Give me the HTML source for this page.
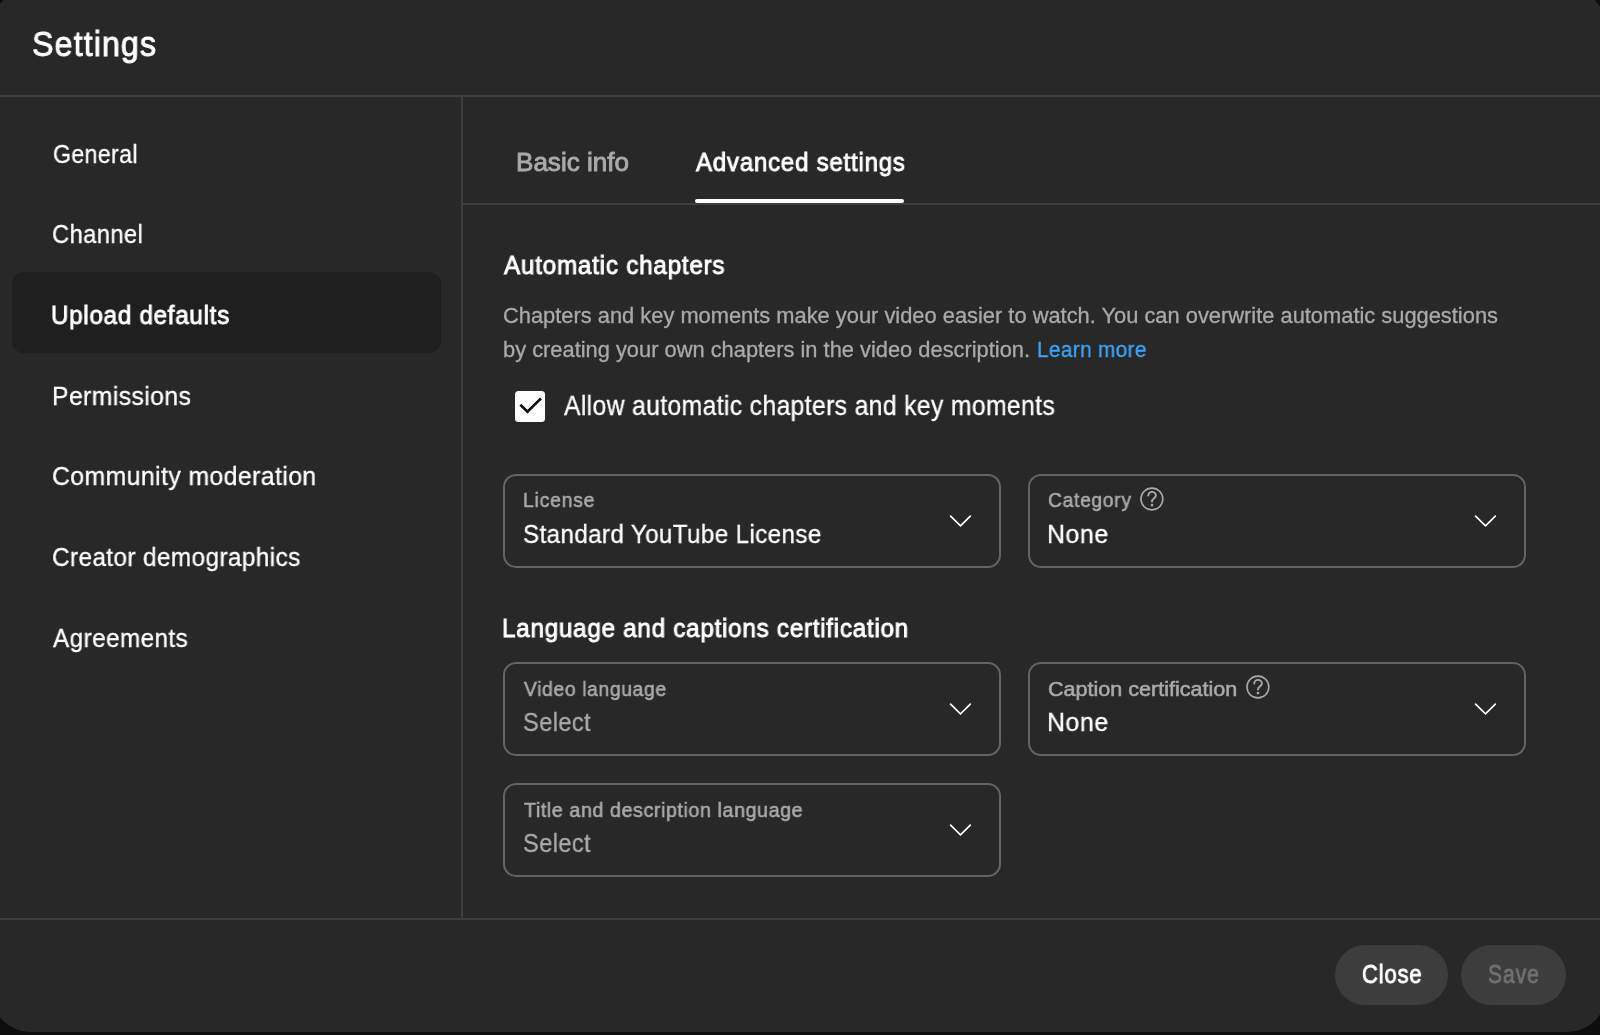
<!DOCTYPE html>
<html><head><meta charset="utf-8"><style>
html,body{margin:0;padding:0;width:1600px;height:1035px;overflow:hidden;background:#0d0d0d;}
.dlg{position:absolute;left:-7.7px;top:-11px;width:1613.7px;height:1043px;border-radius:38px;background:#282828;overflow:hidden;}
.abs{position:absolute;}
.t{position:absolute;white-space:nowrap;will-change:transform;font-family:"Liberation Sans",sans-serif;transform-origin:0 0;}
.ic{position:absolute;overflow:visible;}
.box{position:absolute;border:2px solid #646464;border-radius:13px;box-sizing:border-box;}
</style></head><body>
<div class="dlg"></div>
<div class="abs" style="left:0;top:95px;width:1600px;height:2px;background:#3e3e3e"></div>
<div class="abs" style="left:461px;top:97px;width:2px;height:821px;background:#3e3e3e"></div>
<div class="abs" style="left:463px;top:203px;width:1137px;height:2px;background:#3e3e3e"></div>
<div class="abs" style="left:0;top:918px;width:1600px;height:2px;background:#3e3e3e"></div>
<div class="abs" style="left:12px;top:272px;width:428.7px;height:80.5px;border-radius:12px;background:#1f1f1f"></div>
<div class="abs" style="left:695px;top:199.3px;width:209px;height:3.7px;border-radius:2px;background:#ffffff"></div>
<div class="abs" style="left:514.8px;top:390.9px;width:30.4px;height:31px;border-radius:3.5px;background:#ffffff"></div>
<svg class="ic" style="left:505px;top:380px" width="50" height="50" viewBox="0 0 50 50"><path d="M15.3 24.8 L22.5 31.7 L36 18.4" fill="none" stroke="#0f0f0f" stroke-width="2.7"/></svg>
<div class="box" style="left:503px;top:474px;width:498px;height:94px"></div>
<div class="box" style="left:1028px;top:474px;width:498px;height:94px"></div>
<div class="box" style="left:503px;top:662px;width:498px;height:94.3px"></div>
<div class="box" style="left:1028px;top:662px;width:498px;height:94.2px"></div>
<div class="box" style="left:503px;top:783px;width:498px;height:94.2px"></div>
<svg class="ic" style="left:945px;top:510px" width="30" height="20" viewBox="0 0 30 20"><path d="M5.6 6.2 L15.5 15.9 L25.3 6.2" fill="none" stroke="#ffffff" stroke-width="1.7" stroke-linecap="round" stroke-linejoin="miter"/></svg>
<svg class="ic" style="left:1470px;top:510px" width="30" height="20" viewBox="0 0 30 20"><path d="M5.6 6.2 L15.5 15.9 L25.3 6.2" fill="none" stroke="#ffffff" stroke-width="1.7" stroke-linecap="round" stroke-linejoin="miter"/></svg>
<svg class="ic" style="left:945px;top:697.6px" width="30" height="20" viewBox="0 0 30 20"><path d="M5.6 6.2 L15.5 15.9 L25.3 6.2" fill="none" stroke="#ffffff" stroke-width="1.7" stroke-linecap="round" stroke-linejoin="miter"/></svg>
<svg class="ic" style="left:1470px;top:697.6px" width="30" height="20" viewBox="0 0 30 20"><path d="M5.6 6.2 L15.5 15.9 L25.3 6.2" fill="none" stroke="#ffffff" stroke-width="1.7" stroke-linecap="round" stroke-linejoin="miter"/></svg>
<svg class="ic" style="left:945px;top:818.7px" width="30" height="20" viewBox="0 0 30 20"><path d="M5.6 6.2 L15.5 15.9 L25.3 6.2" fill="none" stroke="#ffffff" stroke-width="1.7" stroke-linecap="round" stroke-linejoin="miter"/></svg>
<svg class="ic" style="left:1137.6px;top:484.9px" width="28" height="28" viewBox="0 0 28 28"><circle cx="13.9" cy="14" r="10.9" fill="none" stroke="#aaaaaa" stroke-width="1.6"/><path d="M10.3 10.5 C10.3 8.4 12 6.9 14 6.9 C16.1 6.9 17.9 8.4 17.9 10.5 C17.9 13 14 13.4 14 16.5" fill="none" stroke="#aaaaaa" stroke-width="1.9" stroke-linecap="round"/><circle cx="14" cy="20.1" r="1.35" fill="#aaaaaa"/></svg>
<svg class="ic" style="left:1243.6px;top:673.2px" width="28" height="28" viewBox="0 0 28 28"><circle cx="13.9" cy="14" r="10.9" fill="none" stroke="#aaaaaa" stroke-width="1.6"/><path d="M10.3 10.5 C10.3 8.4 12 6.9 14 6.9 C16.1 6.9 17.9 8.4 17.9 10.5 C17.9 13 14 13.4 14 16.5" fill="none" stroke="#aaaaaa" stroke-width="1.9" stroke-linecap="round"/><circle cx="14" cy="20.1" r="1.35" fill="#aaaaaa"/></svg>
<div class="abs" style="left:1335px;top:945px;width:112.7px;height:60.4px;border-radius:31px;background:#3d3d3d"></div>
<div class="abs" style="left:1461.4px;top:945px;width:104.6px;height:60.4px;border-radius:31px;background:#3d3d3d"></div>
<div class="t" style="left:31.99px;top:21.90px;font-size:35.47px;line-height:44px;font-weight:400;color:#ffffff;-webkit-text-stroke:0.90px #ffffff;letter-spacing:1.153px;transform:scaleX(0.9108)">Settings</div><div class="t" style="left:52.52px;top:137.50px;font-size:26.16px;line-height:33px;font-weight:400;color:#ffffff;-webkit-text-stroke:0.30px #ffffff;letter-spacing:0.470px;transform:scaleX(0.8824)">General</div><div class="t" style="left:52.20px;top:217.90px;font-size:26.16px;line-height:33px;font-weight:400;color:#ffffff;-webkit-text-stroke:0.30px #ffffff;letter-spacing:0.493px;transform:scaleX(0.9048)">Channel</div><div class="t" style="left:51.26px;top:298.90px;font-size:26.16px;line-height:33px;font-weight:400;color:#ffffff;-webkit-text-stroke:0.90px #ffffff;letter-spacing:0.819px;transform:scaleX(0.9223)">Upload defaults</div><div class="t" style="left:51.51px;top:379.80px;font-size:26.16px;line-height:33px;font-weight:400;color:#ffffff;-webkit-text-stroke:0.30px #ffffff;letter-spacing:0.434px;transform:scaleX(0.9461)">Permissions</div><div class="t" style="left:52.25px;top:460.30px;font-size:26.16px;line-height:33px;font-weight:400;color:#ffffff;-webkit-text-stroke:0.30px #ffffff;letter-spacing:0.436px;transform:scaleX(0.9481)">Community moderation</div><div class="t" style="left:52.27px;top:541.20px;font-size:26.16px;line-height:33px;font-weight:400;color:#ffffff;-webkit-text-stroke:0.30px #ffffff;letter-spacing:0.419px;transform:scaleX(0.9305)">Creator demographics</div><div class="t" style="left:52.80px;top:621.90px;font-size:26.16px;line-height:33px;font-weight:400;color:#ffffff;-webkit-text-stroke:0.30px #ffffff;letter-spacing:0.484px;transform:scaleX(0.9270)">Agreements</div><div class="t" style="left:515.90px;top:145.80px;font-size:26.02px;line-height:33px;font-weight:400;color:#aaaaaa;-webkit-text-stroke:0.89px #aaaaaa;letter-spacing:-0.000px;transform:scaleX(1.0016)">Basic info</div><div class="t" style="left:696.30px;top:146.20px;font-size:26.45px;line-height:33px;font-weight:400;color:#ffffff;-webkit-text-stroke:0.90px #ffffff;letter-spacing:0.861px;transform:scaleX(0.9090)">Advanced settings</div><div class="t" style="left:503.70px;top:248.50px;font-size:26.16px;line-height:33px;font-weight:400;color:#ffffff;-webkit-text-stroke:0.90px #ffffff;letter-spacing:0.840px;transform:scaleX(0.9261)">Automatic chapters</div><div class="t" style="left:503.00px;top:302.00px;font-size:21.8px;line-height:27px;font-weight:400;color:#aaaaaa;-webkit-text-stroke:0.30px #aaaaaa;letter-spacing:0.000px;transform:scaleX(1.0027)">Chapters and key moments make your video easier to watch. You can overwrite automatic suggestions</div><div class="t" style="left:503.00px;top:335.80px;font-size:21.8px;line-height:27px;font-weight:400;color:#aaaaaa;-webkit-text-stroke:0.30px #aaaaaa;letter-spacing:0.000px;transform:scaleX(1.0023)">by creating your own chapters in the video description.</div><div class="t" style="left:1036.85px;top:335.80px;font-size:21.8px;line-height:27px;font-weight:400;color:#3ea6ff;-webkit-text-stroke:0.30px #3ea6ff;letter-spacing:0.379px;transform:scaleX(0.9529)">Learn more</div><div class="t" style="left:563.90px;top:389.00px;font-size:27.03px;line-height:34px;font-weight:400;color:#ffffff;-webkit-text-stroke:0.30px #ffffff;letter-spacing:0.413px;transform:scaleX(0.9135)">Allow automatic chapters and key moments</div><div class="t" style="left:523.27px;top:486.70px;font-size:21.08px;line-height:26px;font-weight:400;color:#aaaaaa;-webkit-text-stroke:0.58px #aaaaaa;letter-spacing:0.755px;transform:scaleX(0.9250)">License</div><div class="t" style="left:523.29px;top:517.50px;font-size:26.6px;line-height:33px;font-weight:400;color:#ffffff;-webkit-text-stroke:0.30px #ffffff;letter-spacing:0.426px;transform:scaleX(0.9086)">Standard YouTube License</div><div class="t" style="left:1047.69px;top:486.70px;font-size:21.08px;line-height:26px;font-weight:400;color:#aaaaaa;-webkit-text-stroke:0.58px #aaaaaa;letter-spacing:0.775px;transform:scaleX(0.9125)">Category</div><div class="t" style="left:1047.43px;top:517.50px;font-size:26.6px;line-height:33px;font-weight:400;color:#ffffff;-webkit-text-stroke:0.30px #ffffff;letter-spacing:0.627px;transform:scaleX(0.9335)">None</div><div class="t" style="left:502.24px;top:612.40px;font-size:26.16px;line-height:33px;font-weight:400;color:#ffffff;-webkit-text-stroke:0.90px #ffffff;letter-spacing:0.766px;transform:scaleX(0.9283)">Language and captions certification</div><div class="t" style="left:524.20px;top:675.70px;font-size:21.08px;line-height:26px;font-weight:400;color:#aaaaaa;-webkit-text-stroke:0.58px #aaaaaa;letter-spacing:0.714px;transform:scaleX(0.9141)">Video language</div><div class="t" style="left:523.31px;top:706.20px;font-size:26.6px;line-height:33px;font-weight:400;color:#aaaaaa;-webkit-text-stroke:0.30px #aaaaaa;letter-spacing:0.455px;transform:scaleX(0.8879)">Select</div><div class="t" style="left:1047.58px;top:675.70px;font-size:21.08px;line-height:26px;font-weight:400;color:#aaaaaa;-webkit-text-stroke:0.58px #aaaaaa;letter-spacing:0.000px;transform:scaleX(1.0224)">Caption certification</div><div class="t" style="left:1047.43px;top:706.20px;font-size:26.6px;line-height:33px;font-weight:400;color:#ffffff;-webkit-text-stroke:0.30px #ffffff;letter-spacing:0.627px;transform:scaleX(0.9335)">None</div><div class="t" style="left:524.20px;top:797.10px;font-size:21.08px;line-height:26px;font-weight:400;color:#aaaaaa;-webkit-text-stroke:0.58px #aaaaaa;letter-spacing:0.616px;transform:scaleX(0.9339)">Title and description language</div><div class="t" style="left:523.31px;top:826.90px;font-size:26.6px;line-height:33px;font-weight:400;color:#aaaaaa;-webkit-text-stroke:0.30px #aaaaaa;letter-spacing:0.455px;transform:scaleX(0.8879)">Select</div><div class="t" style="left:1361.54px;top:958.10px;font-size:25.58px;line-height:32px;font-weight:400;color:#ffffff;-webkit-text-stroke:0.86px #ffffff;letter-spacing:1.024px;transform:scaleX(0.8570)">Close</div><div class="t" style="left:1488.38px;top:958.10px;font-size:25.58px;line-height:32px;font-weight:400;color:#717171;-webkit-text-stroke:0.86px #717171;letter-spacing:1.214px;transform:scaleX(0.8202)">Save</div>
</body></html>
